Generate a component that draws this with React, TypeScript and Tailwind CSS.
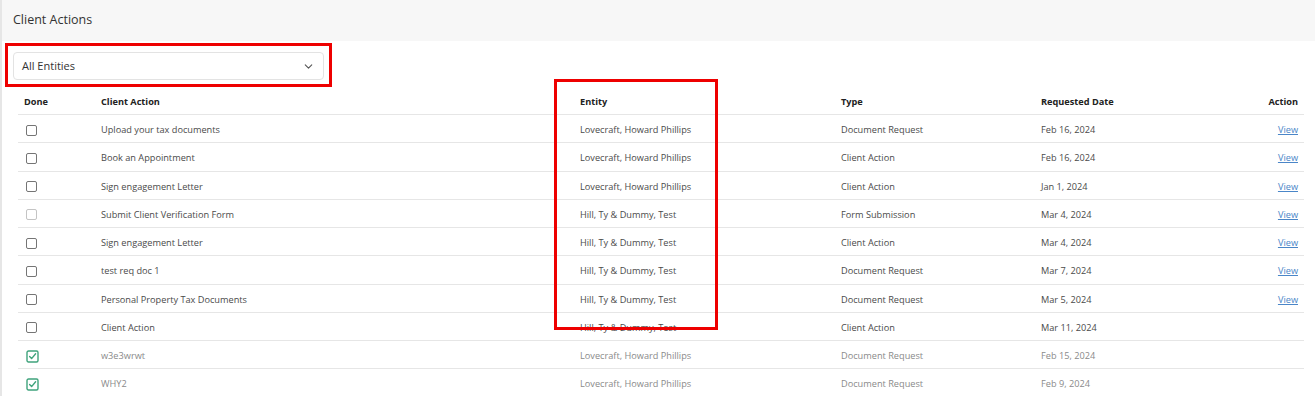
import { ChevronDown } from 'lucide-react'

type Row = {
  done: boolean
  disabled?: boolean
  action: string
  entity: string
  type: string
  date: string
  view: boolean
}

const rows: Row[] = [
  { done: false, action: 'Upload your tax documents', entity: 'Lovecraft, Howard Phillips', type: 'Document Request', date: 'Feb 16, 2024', view: true },
  { done: false, action: 'Book an Appointment', entity: 'Lovecraft, Howard Phillips', type: 'Client Action', date: 'Feb 16, 2024', view: true },
  { done: false, action: 'Sign engagement Letter', entity: 'Lovecraft, Howard Phillips', type: 'Client Action', date: 'Jan 1, 2024', view: true },
  { done: false, disabled: true, action: 'Submit Client Verification Form', entity: 'Hill, Ty & Dummy, Test', type: 'Form Submission', date: 'Mar 4, 2024', view: true },
  { done: false, action: 'Sign engagement Letter', entity: 'Hill, Ty & Dummy, Test', type: 'Client Action', date: 'Mar 4, 2024', view: true },
  { done: false, action: 'test req doc 1', entity: 'Hill, Ty & Dummy, Test', type: 'Document Request', date: 'Mar 7, 2024', view: true },
  { done: false, action: 'Personal Property Tax Documents', entity: 'Hill, Ty & Dummy, Test', type: 'Document Request', date: 'Mar 5, 2024', view: true },
  { done: false, action: 'Client Action', entity: 'Hill, Ty & Dummy, Test', type: 'Client Action', date: 'Mar 11, 2024', view: false },
  { done: true, action: 'w3e3wrwt', entity: 'Lovecraft, Howard Phillips', type: 'Document Request', date: 'Feb 15, 2024', view: false },
  { done: true, action: 'WHY2', entity: 'Lovecraft, Howard Phillips', type: 'Document Request', date: 'Feb 9, 2024', view: false },
]

const cols = 'grid grid-cols-[77px_479px_261px_200px_1fr] items-center'

function Checkbox({ done, disabled }: { done: boolean; disabled?: boolean }) {
  if (done) {
    return (
      <svg width={13} height={13} viewBox="0 0 13 13" className="block">
        <rect x={1} y={1} width={11} height={11} rx={1.5} fill="none" stroke="#3fa37c" strokeWidth={1.4} />
        <path d="M3.6 6.6 L5.6 8.6 L9.6 3.8" fill="none" stroke="#3fa37c" strokeWidth={1.4} strokeLinecap="round" strokeLinejoin="round" />
      </svg>
    )
  }
  return (
    <span
      className={
        disabled
          ? 'block h-[11px] w-[11px] rounded-[2px] border border-[#c4c4c4]'
          : 'block h-[11px] w-[11px] rounded-[2px] border border-[#757575]'
      }
    />
  )
}

export default function App() {
  return (
    <div className="relative h-[396px] w-[1315px] overflow-hidden bg-white border-l-2 border-[#e6e6e6] font-['Segoe_UI','Open_Sans',sans-serif] text-[#444]">
      {/* Page header */}
      <div className="flex h-[41px] items-center bg-[#f7f7f7] pl-[11px] text-[12.5px] text-[#333]">
        Client Actions
      </div>

      {/* Entity filter */}
      <div className="pl-[11px] pt-[11px]">
        <div className="flex h-[28px] w-[311px] items-center justify-between rounded-[4px] border border-[#e3e3e3] pl-[8px] pr-[8px] text-[11px] text-[#333]">
          <span>All Entities</span>
          <ChevronDown size={13} strokeWidth={2} className="text-[#555]" />
        </div>
      </div>

      {/* Table */}
      <div className="ml-[16px] mt-[10px] w-[1286px] text-[9.2px]">
        <div className={`${cols} h-[24px] font-bold text-[#222]`}>
          <div className="pl-[6px]">Done</div>
          <div className="pl-[6px]">Client Action</div>
          <div className="pl-[6px]">Entity</div>
          <div className="pl-[6px]">Type</div>
          <div className="pl-[6px] flex justify-between pr-[6px]">
            <span>Requested Date</span>
            <span>Action</span>
          </div>
        </div>
        {rows.map((r, i) => (
          <div
            key={i}
            className={`${cols} h-[28.25px] border-t border-[#e6e6e6] pt-[3px] ${r.done ? 'text-[#8a8a8a]' : 'text-[#4a4a4a]'}`}
          >
            <div className="pl-[8px]">
              <Checkbox done={r.done} disabled={r.disabled} />
            </div>
            <div className="pl-[6px]">{r.action}</div>
            <div className="pl-[6px]">{r.entity}</div>
            <div className="pl-[6px]">{r.type}</div>
            <div className="pl-[6px] flex justify-between pr-[6px]">
              <span>{r.date}</span>
              {r.view && <a className="text-[#4a86c8] underline">View</a>}
            </div>
          </div>
        ))}
      </div>

      {/* Annotation boxes */}
      <div className="pointer-events-none absolute left-[3px] top-[43px] h-[44px] w-[327px] border-[3px] border-[#ee0000]" />
      <div className="pointer-events-none absolute left-[552px] top-[79px] h-[251px] w-[164px] border-[3px] border-[#ee0000]" />
    </div>
  )
}
